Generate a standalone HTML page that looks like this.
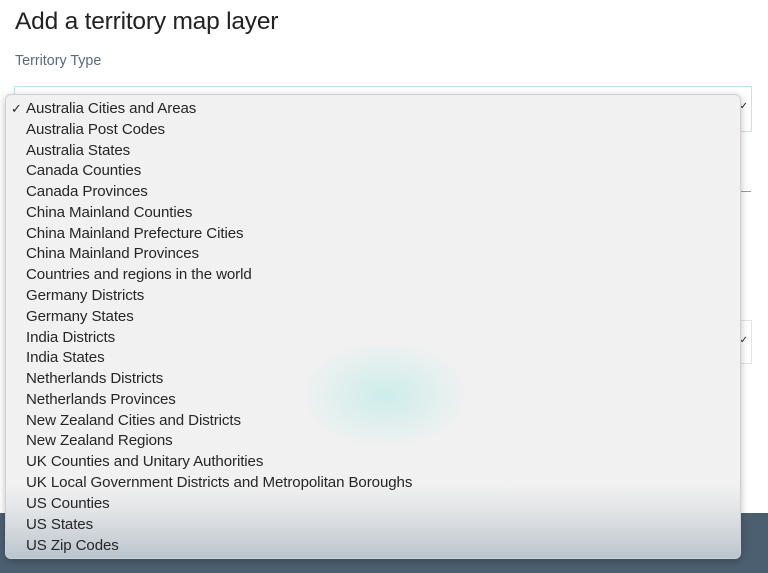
<!DOCTYPE html>
<html><head><meta charset="utf-8"><style>
*{margin:0;padding:0;box-sizing:border-box}
body{width:768px;height:573px;overflow:hidden;background:#fff;font-family:"Liberation Sans",sans-serif;position:relative}
h1{position:absolute;left:15px;top:8px;font-size:24.5px;font-weight:400;color:#222;letter-spacing:-0.2px}
.lbl{position:absolute;left:15px;top:53px;font-size:14.3px;color:#5b6b7c}
.sel1{position:absolute;left:14px;top:86px;width:738px;height:46px;border:1px solid #bfe8e4;background:#fff}
.sel2{position:absolute;left:14px;top:320px;width:738px;height:44px;border:1px solid #e4e4e4;background:#fff}
.chev{position:absolute;right:3px;font-size:10px;color:#222}
.hr{position:absolute;left:741px;top:191px;width:10px;height:1px;background:#999}
.glow{position:absolute;left:300px;top:340px;width:170px;height:110px;border-radius:50%;background:radial-gradient(ellipse,rgba(198,236,234,.85) 0%,rgba(198,236,234,0) 70%)}
.dark{position:absolute;left:0;top:513px;width:768px;height:60px;background:#4b5f71}
.dd{position:absolute;left:5px;top:94px;width:736px;height:465px;border-radius:6px;background:linear-gradient(#f1f1f1 0,#f1f1f1 390px,#dfe2e5 420px,#b9c3cc 465px);box-shadow:0 2px 8px rgba(0,0,0,.25);border:1px solid #d0d0d0;overflow:hidden}
.dd div{position:absolute;left:20px;font-size:15.1px;color:#262626;white-space:nowrap;line-height:20px;letter-spacing:-0.1px}
.ck{position:absolute;left:5px;font-size:13px;color:#262626}
</style></head><body>
<h1>Add a territory map layer</h1>
<div class="lbl">Territory Type</div>
<div class="sel1"><span class="chev" style="top:14px">&#10003;</span></div>
<div class="hr"></div>
<div class="sel2"><span class="chev" style="top:14px">&#10003;</span></div>
<div class="dark"></div>
<div class="dd">
<span class="ck" style="top:6px">✓</span>
<div style="top:4px">Australia Cities and Areas</div>
<div style="top:25px">Australia Post Codes</div>
<div style="top:46px">Australia States</div>
<div style="top:66px">Canada Counties</div>
<div style="top:87px">Canada Provinces</div>
<div style="top:108px">China Mainland Counties</div>
<div style="top:129px">China Mainland Prefecture Cities</div>
<div style="top:149px">China Mainland Provinces</div>
<div style="top:170px">Countries and regions in the world</div>
<div style="top:191px">Germany Districts</div>
<div style="top:212px">Germany States</div>
<div style="top:233px">India Districts</div>
<div style="top:253px">India States</div>
<div style="top:274px">Netherlands Districts</div>
<div style="top:295px">Netherlands Provinces</div>
<div style="top:316px">New Zealand Cities and Districts</div>
<div style="top:336px">New Zealand Regions</div>
<div style="top:357px">UK Counties and Unitary Authorities</div>
<div style="top:378px">UK Local Government Districts and Metropolitan Boroughs</div>
<div style="top:399px">US Counties</div>
<div style="top:420px">US States</div>
<div style="top:441px">US Zip Codes</div>
</div>
<div class="glow"></div>
</body></html>
